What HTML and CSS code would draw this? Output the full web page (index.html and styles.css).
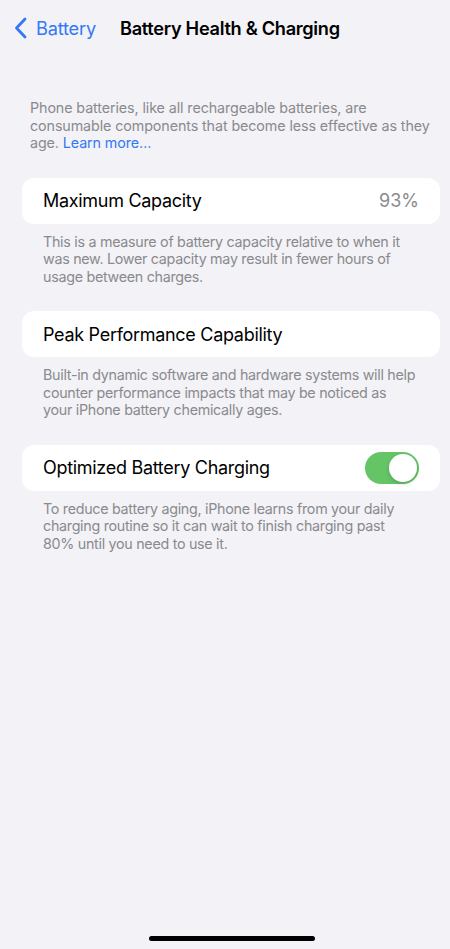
FILE: index.html
```html
<!DOCTYPE html>
<html lang="en">
  <head>
    <meta charset="UTF-8" />
    <meta name="viewport" content="width=device-width, initial-scale=1.0" />
    <title>Battery Health &amp; Charging</title>
    <link rel="stylesheet" href="styles.css">
  </head>
  <body>
    <div class="screen">
      <!-- Navigation Bar -->
      <header class="nav">
        <a class="back" href="#">
          <svg class="chevron" width="13" height="22" viewBox="0 0 13 22">
            <path d="M11 2 L2.5 11 L11 20" fill="none" stroke="#3478f6" stroke-width="2.8" stroke-linecap="round" stroke-linejoin="round" />
          </svg>
          <span>Battery</span>
        </a>
        <h1 class="title">Battery Health &amp; Charging</h1>
      </header>

      <p class="intro">
        Phone batteries, like all rechargeable batteries, are consumable components that become less effective as they age. <a class="link" href="#">Learn more…</a>
      </p>

      <!-- Settings Groups -->
      <section class="group">
        <div class="cell">
          <span class="label">Maximum Capacity</span>
          <span class="value">93%</span>
        </div>
        <p class="footer">This is a measure of battery capacity relative to when it was new. Lower capacity may result in fewer hours of usage between charges.</p>
      </section>

      <section class="group">
        <div class="cell">
          <span class="label">Peak Performance Capability</span>
        </div>
        <p class="footer">Built-in dynamic software and hardware systems will help counter performance impacts that may be noticed as your iPhone battery chemically ages.</p>
      </section>

      <section class="group">
        <div class="cell">
          <span class="label">Optimized Battery Charging</span>
          <span class="toggle on"><span class="knob"></span></span>
        </div>
        <p class="footer">To reduce battery aging, iPhone learns from your daily charging routine so it can wait to finish charging past 80% until you need to use it.</p>
      </section>

      <div class="spacer"></div>
      <div class="home-indicator"></div>
    </div>
  </body>
</html>
```

FILE: styles.css
```css
/* Page */
body {
  margin: 0;
  background: #f2f2f7;
  font-family: Inter, "Noto Sans", Arial, sans-serif;
  color: #000;
}

.screen {
  display: flex;
  flex-direction: column;
  height: 949px;
}

/* Navigation Bar */
.nav {
  display: flex;
  align-items: center;
  height: 56px;
  padding: 0 0 0 14px;
}
.back {
  display: flex;
  align-items: center;
  gap: 9px;
  color: #3478f6;
  text-decoration: none;
  font-size: 18.2px;
  letter-spacing: -0.2px;
}
.chevron {
  display: block;
}
.title {
  margin: 0 0 0 24px;
  font-size: 18.2px;
  font-weight: 600;
  letter-spacing: -0.3px;
}

/* Intro Text */
.intro {
  margin: 43px 20px 0 30px;
  font-size: 14.3px;
  line-height: 17.5px;
  color: #8a8a8e;
  letter-spacing: -0.1px;
}
.link {
  color: #3478f6;
  text-decoration: none;
}

/* Grouped Cells */
.group {
  margin: 26px 10px 0 22px;
}
.cell {
  display: flex;
  align-items: center;
  justify-content: space-between;
  height: 46px;
  padding: 0 21px;
  background: #fff;
  border-radius: 12px;
}
.label {
  font-size: 18px;
  letter-spacing: -0.3px;
}
.value {
  font-size: 18px;
  color: #8a8a8e;
}
.footer {
  margin: 9px 22.5px 0 21px;
  font-size: 14.3px;
  line-height: 17.5px;
  color: #8a8a8e;
  letter-spacing: -0.29px;
}

/* Toggle Switch */
.toggle {
  display: flex;
  align-items: center;
  justify-content: flex-end;
  width: 54px;
  height: 32px;
  padding: 0 2px;
  box-sizing: border-box;
  border-radius: 16px;
  background: #e9e9ea;
}
.toggle.on {
  background: #65c466;
}
.knob {
  width: 28px;
  height: 28px;
  border-radius: 50%;
  background: #fff;
  box-shadow: 0 2px 4px rgba(0, 0, 0, 0.15);
}

/* Home Indicator */
.spacer {
  flex: 1;
}
.home-indicator {
  align-self: center;
  width: 166px;
  height: 5px;
  margin: 0 0 8px 13px;
  border-radius: 3px;
  background: #000;
}
```
